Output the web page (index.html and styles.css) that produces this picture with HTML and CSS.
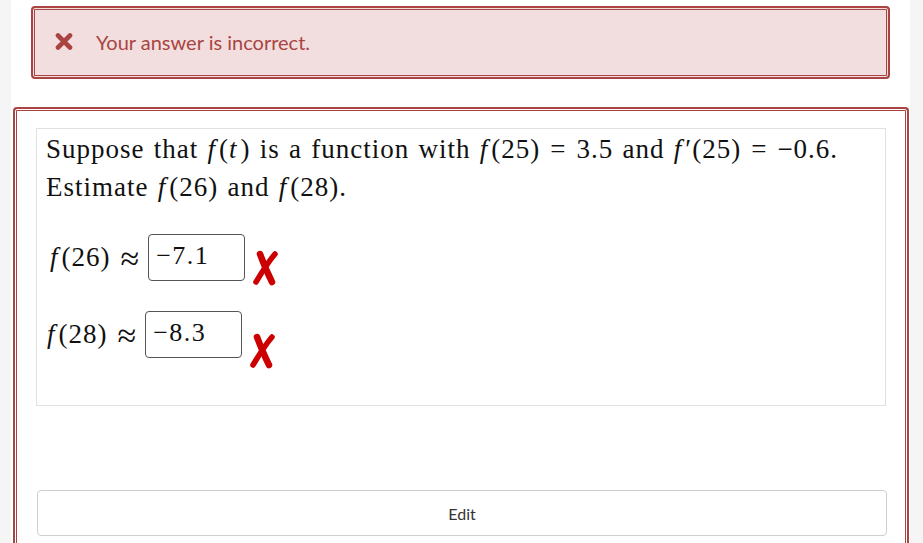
FILE: index.html
```html
<!DOCTYPE html>
<html>
<head>
<meta charset="utf-8">
<link rel="stylesheet" href="styles.css">
</head>
<body>
<div class="page">
  <div class="alert">
    <svg class="alert-icon" width="18" height="17" viewBox="0 0 18 17"><path d="M3 2.5 L15 14.5 M15 2.5 L3 14.5" stroke="#a94442" stroke-width="4.6" stroke-linecap="round"/></svg>
    <span class="alert-text">Your answer is incorrect.</span>
  </div>
  <div class="panel">
    <div class="question">
      <p class="stem">Suppose that <span class="m"><i>f</i>(<i>t</i>)</span> is a function with <span class="m"><i>f</i>(25)<span class="rel">=</span>3.5</span> and <span class="m"><i>f</i>′(25)<span class="rel">=</span>−0.6</span>.<br>Estimate <span class="m"><i>f</i>(26)</span> and <span class="m"><i>f</i>(28)</span>.</p>
      <div class="answers">
        <div class="answer-row">
          <span class="label"><i>f</i>(26)<span class="rel">≈</span></span>
          <span class="field">−7.1</span>
          <svg class="wrong" width="28" height="38" viewBox="0 0 28 38"><path d="M9 5 C12 13 16 23 21 33" stroke="#cc0000" stroke-width="6.5" stroke-linecap="round" fill="none"/><path d="M24 5 C18 12 11 23 5 33" stroke="#cc0000" stroke-width="5.5" stroke-linecap="round" fill="none"/></svg>
        </div>
        <div class="answer-row second">
          <span class="label"><i>f</i>(28)<span class="rel">≈</span></span>
          <span class="field">−8.3</span>
          <svg class="wrong low" width="28" height="38" viewBox="0 0 28 38"><path d="M9 5 C12 13 16 23 21 33" stroke="#cc0000" stroke-width="6.5" stroke-linecap="round" fill="none"/><path d="M24 5 C18 12 11 23 5 33" stroke="#cc0000" stroke-width="5.5" stroke-linecap="round" fill="none"/></svg>
        </div>
      </div>
    </div>
    <div class="actions">
      <button class="edit">Edit</button>
    </div>
  </div>
</div>
</body>
</html>
```

FILE: styles.css
```css
html, body {
  margin: 0;
  padding: 0;
}
body {
  background: #f6f5f5;
  font-family: Lato, "Liberation Sans", sans-serif;
  overflow: hidden;
}
.page {
  margin: 0 13px 0 11px;
  background: #ffffff;
  padding-top: 6px;
  min-height: 537px;
}
.alert {
  margin: 0 20px 0 20px;
  height: 73px;
  box-sizing: border-box;
  border: 2px solid #a94442;
  box-shadow: inset 0 0 0 1px #f2dede, inset 0 0 0 2px #a94442;
  border-radius: 4px;
  background: #f2dede;
  display: flex;
  align-items: center;
  padding: 0 0 0 22px;
  gap: 23px;
}
.alert-icon {
  flex: none;
  margin-top: -2px;
}
.alert-text {
  color: #a94442;
  font-size: 20px;
  margin-top: -1px;
}
.panel {
  margin: 28px 1px 0 2px;
  border: 2px solid #a94442;
  border-bottom: none;
  box-shadow: inset 0 0 0 1px #ffffff, inset 0 0 0 2px #a94442;
  border-radius: 4px 4px 0 0;
  padding: 19px 21px 20px 21px;
}
.question {
  border: 1px solid #e0e0e0;
  height: 278px;
  box-sizing: border-box;
  padding: 1px 9px 0 9px;
  font-family: "Liberation Serif", "DejaVu Serif", serif;
  color: #111;
}
.stem {
  margin: 0;
  font-size: 27px;
  line-height: 38px;
  letter-spacing: 1px;
  word-spacing: 1.5px;
}
.m i {
  font-style: italic;
  padding-right: 3px;
}
.rel {
  display: inline-block;
  margin: 0 10px;
}
.answers {
  margin-top: 28px;
  display: flex;
  flex-direction: column;
  gap: 30px;
  padding-left: 4px;
}
.answer-row {
  display: flex;
  align-items: center;
  height: 47px;
  font-size: 27px;
  letter-spacing: 1px;
}
.answer-row.second {
  margin-left: -3px;
}
.label {
  display: flex;
  align-items: center;
}
.label i {
  padding-right: 3px;
}
.label .rel {
  font-size: 34px;
  line-height: 1;
  margin: 2px 8px 0 10px;
}
.field {
  width: 97px;
  height: 47px;
  box-sizing: border-box;
  border: 1px solid #555;
  border-radius: 4px;
  padding-left: 7px;
  display: flex;
  align-items: center;
  font-size: 26px;
  letter-spacing: 1.5px;
  padding-bottom: 3px;
}
.wrong {
  margin-left: 6px;
  margin-top: 20px;
}
.wrong.low {
  margin-top: 32px;
}
.actions {
  margin-top: 84px;
}
.edit {
  display: block;
  width: 100%;
  height: 46px;
  margin-left: 1px;
  background: #fff;
  border: 1px solid #cfcfcf;
  border-radius: 4px;
  font-family: Lato, "Liberation Sans", sans-serif;
  font-size: 16px;
  color: #333;
  padding: 0;
}
```
